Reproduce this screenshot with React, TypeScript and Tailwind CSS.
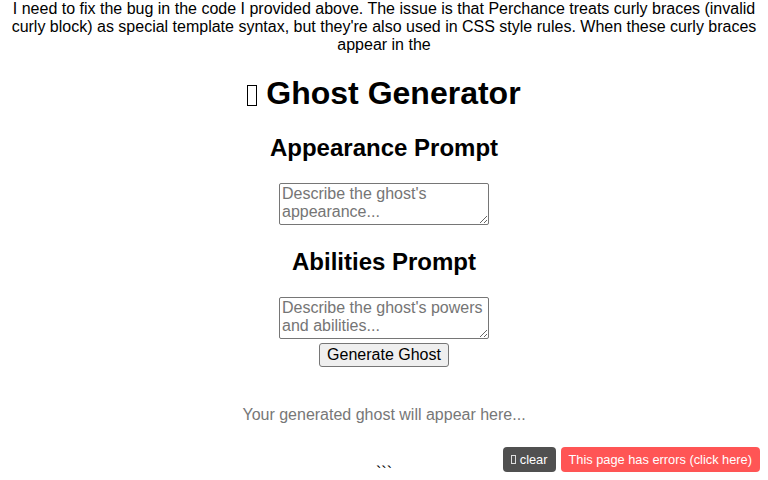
export default function App() {
  return (
    <div className="min-h-[480px] bg-white text-center font-['Liberation_Sans',Arial,sans-serif] text-base leading-[normal] text-black">
      <div className="px-[8px]">
        I need to fix the bug in the code I provided above. The issue is that Perchance treats curly braces (invalid curly block) as special template syntax, but they're also used in CSS style rules. When these curly braces appear in the
      </div>
      <h1 className="mb-[18.5px] mt-[21.44px] text-[32px] font-bold">
        <span className="inline-block h-[21px] w-[10px] border border-black align-[-2px]" aria-label="👻" /> Ghost Generator
      </h1>
      <h2 className="mb-[19px] mt-[19.92px] text-2xl font-bold">Appearance Prompt</h2>
      <textarea
        rows={2}
        placeholder="Describe the ghost's appearance..."
        className="h-[42px] w-[210px] resize-y rounded-[2px] border border-[#767676] px-[2px] py-[1px] align-baseline text-base leading-[normal] placeholder:text-[#757575]"
      />
      <h2 className="mb-[19px] mt-[17px] text-2xl font-bold">Abilities Prompt</h2>
      <textarea
        rows={2}
        placeholder="Describe the ghost's powers and abilities..."
        className="h-[42px] w-[210px] resize-y rounded-[2px] border border-[#767676] px-[2px] py-[1px] align-baseline text-base leading-[normal] placeholder:text-[#757575]"
      />
      <br />
      <button className="h-[24px] rounded-[3px] border border-[#767676] bg-[#efefef] px-[7px] text-base leading-[normal] text-black">
        Generate Ghost
      </button>
      <div className="mt-[39px] text-[#777777]">Your generated ghost will appear here...</div>
      <div className="mt-[40px]">```</div>
      <div className="fixed bottom-[8px] right-[8px] flex gap-[5px] text-[12.8px] leading-[normal] text-white">
        <button className="flex h-[25px] items-center rounded-[4px] bg-[#505050] px-[8px]">
          <span className="mr-[4px] inline-block h-[9px] w-[5px] border border-[#dddddd]" aria-label="🗑️" />
          clear
        </button>
        <button className="h-[25px] rounded-[4px] bg-[#ff5555] px-[8px]">This page has errors (click here)</button>
      </div>
    </div>
  );
}
